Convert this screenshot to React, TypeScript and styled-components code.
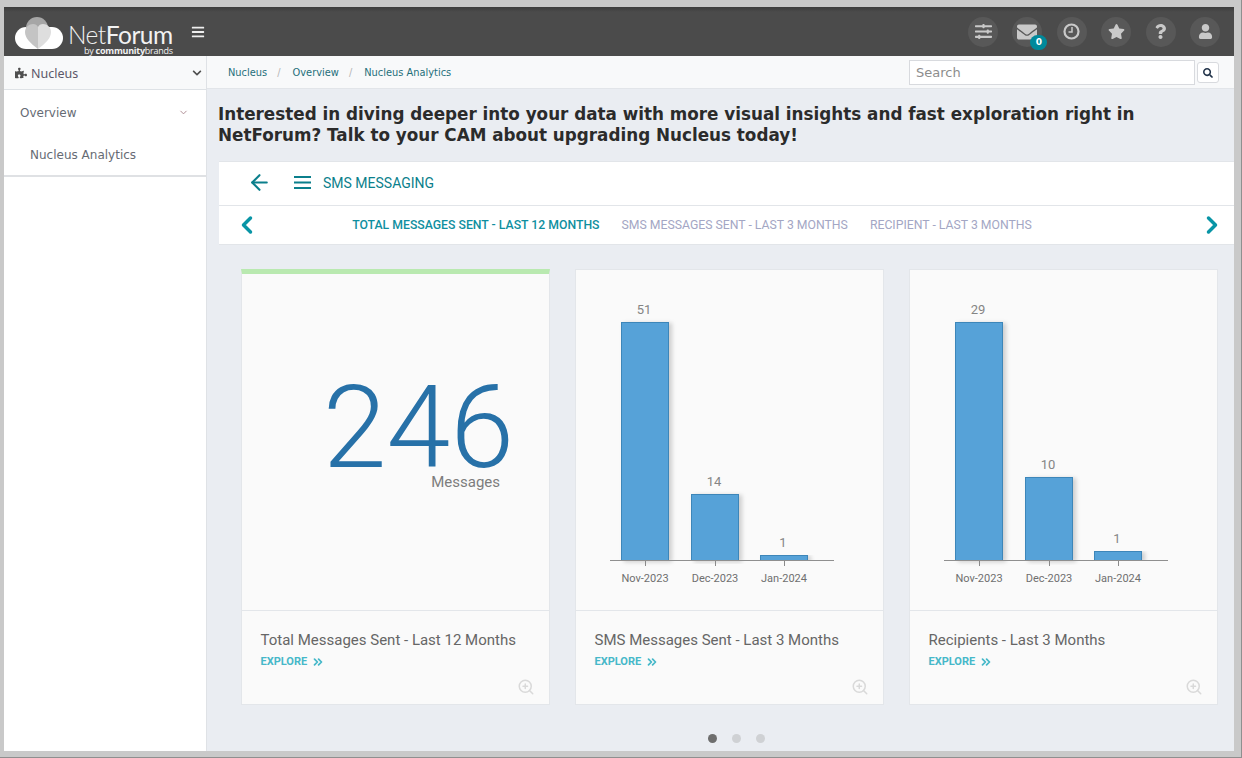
import React from 'react';
import styled, { createGlobalStyle } from 'styled-components';
import { FaBars, FaChevronDown, FaEnvelope, FaPuzzlePiece, FaQuestion, FaSearch, FaSlidersH, FaStar, FaUser } from 'react-icons/fa';
import { FiArrowLeft, FiChevronDown, FiChevronLeft, FiChevronRight, FiChevronsRight, FiZoomIn } from 'react-icons/fi';

const GlobalStyle = createGlobalStyle`
  html, body { margin: 0; padding: 0; height: 100%; }
  body { font-family: 'DejaVu Sans', sans-serif; overflow: hidden; }
  * { box-sizing: border-box; }
`;

const Frame = styled.div`
  width: 1242px;
  height: 758px;
  padding: 7px 8px 7px 4px;
  background: #c9c9c9;
  box-shadow: inset -1px -1px 0 #8f8f8f;
  overflow: hidden;
`;

const Window = styled.div`
  height: 744px;
  display: flex;
  flex-direction: column;
  background: #fff;
  overflow: hidden;
`;

const Header = styled.header`
  height: 49px;
  flex: none;
  display: flex;
  align-items: center;
  justify-content: space-between;
  padding: 0 14px 0 11px;
  background: linear-gradient(#3d3d3d 0, #4b4b4b 5px);
`;

const Brand = styled.div`
  display: flex;
  align-items: center;
`;

const LogoMark = styled.svg`
  display: block;
  margin-top: 2px;
`;

const LogoWords = styled.div`
  position: relative;
  width: 108px;
  height: 46px;
  margin-left: 5px;
  color: #f2f2f2;
`;

const LogoName = styled.span`
  position: absolute;
  top: 17px;
  left: 0;
  font: 300 24.5px/18px Lato, sans-serif;
  letter-spacing: -0.5px;
  white-space: nowrap;
  b {
    font-weight: 400;
  }
`;

const LogoSub = styled.span`
  position: absolute;
  top: 37px;
  left: 16px;
  font: 400 9px/10px 'Open Sans', sans-serif;
  letter-spacing: -0.25px;
  white-space: nowrap;
  b {
    font-weight: 700;
  }
`;

const MenuToggle = styled.div`
  margin: 0 0 0 15px;
  color: #efefef;
  font-size: 14px;
  display: flex;
`;

const HeaderIcons = styled.div`
  display: flex;
  gap: 14.4px;
`;

const IconCircle = styled.div`
  position: relative;
  width: 30px;
  height: 30px;
  border-radius: 50%;
  display: flex;
  align-items: center;
  justify-content: center;
  background: #585858;
  color: #c9c9c9;
  font-size: 17px;
`;

const Badge = styled.span`
  position: absolute;
  right: -5px;
  bottom: -3px;
  width: 17px;
  height: 15px;
  border-radius: 8px;
  background: #00899b;
  color: #fff;
  font: 700 9px/15px 'DejaVu Sans', sans-serif;
  text-align: center;
`;

const Body = styled.div`
  flex: 1;
  display: flex;
  min-height: 0;
`;

const Sidebar = styled.aside`
  width: 203px;
  flex: none;
  border-right: 1px solid #dfe2e6;
  background: #fff;
`;

const ModuleRow = styled.div`
  height: 34px;
  display: flex;
  align-items: center;
  padding: 1px 4px 0 11px;
  gap: 4px;
  background: #f8f9fa;
  border-bottom: 1px solid #dee2e6;
  color: #4f4f4f;
  font: 400 12.5px 'Noto Sans', sans-serif;
`;

const ModuleName = styled.span`
  flex: 1;
  color: #5b5768;
`;

const SideNav = styled.nav`
  border-bottom: 2px solid #dfe1e4;
  height: 87px;
`;

const SideItem = styled.div<{ $sub?: boolean }>`
  height: ${({ $sub }) => ($sub ? '40px' : '45px')};
  display: flex;
  align-items: center;
  justify-content: space-between;
  padding: ${({ $sub }) => ($sub ? '0 12px 0 26px' : '0 17px 0 16px')};
  color: #666b74;
  font: 400 12px 'DejaVu Sans', sans-serif;
  svg {
    color: #a8858d;
    font-size: 11px;
  }
`;

const Main = styled.main`
  flex: 1;
  min-width: 0;
  background: #eaedf2;
  display: flex;
  flex-direction: column;
`;

const BreadcrumbBar = styled.div`
  height: 33px;
  flex: none;
  display: flex;
  align-items: center;
  justify-content: space-between;
  padding: 1px 15px 0 21px;
  background: #f8f9fa;
  border-bottom: 1px solid #e2e5e9;
`;

const Crumbs = styled.div`
  display: flex;
  align-items: center;
  font: 400 9.85px 'DejaVu Sans', sans-serif;
  color: #1f6f7a;
`;

const CrumbSep = styled.span`
  color: #b5b5b5;
  margin: 0 12px 0 10px;
`;

const SearchWrap = styled.div`
  display: flex;
  align-items: center;
  gap: 2px;
`;

const SearchInput = styled.div`
  width: 286px;
  height: 25px;
  padding: 0 6px;
  background: #fff;
  border: 1px solid #d8dade;
  color: #8d8d8d;
  font: 400 13px/24px 'DejaVu Sans', sans-serif;
`;

const SearchButton = styled.div`
  width: 22px;
  height: 21px;
  display: flex;
  align-items: center;
  justify-content: center;
  background: #fff;
  border: 1px solid #d8dade;
  border-radius: 3px;
  color: #22344a;
  font-size: 10px;
`;

const Notice = styled.h2`
  margin: 0;
  padding: 15px 90px 15px 11px;
  flex: none;
  font: 700 16.8px/21px 'DejaVu Sans', sans-serif;
  color: #2b2b2b;
`;

const Panel = styled.section`
  flex: 1;
  margin-left: 12px;
  display: flex;
  flex-direction: column;
  min-height: 0;
`;

const TitleRow = styled.div`
  height: 45px;
  flex: none;
  display: flex;
  align-items: center;
  padding: 0 0 2px 28px;
  background: #fff;
  border-top: 1px solid #e2e5e9;
  border-bottom: 1px solid #e2e5e9;
  color: #0b7f8c;
  font: 400 14px 'Roboto', sans-serif;
`;

const TitleIcons = styled.div`
  display: flex;
  align-items: center;
  gap: 22px;
  margin-right: 12px;
  font-size: 25px;
  svg {
    display: block;
  }
`;

const TabRow = styled.div`
  height: 39px;
  flex: none;
  display: flex;
  align-items: center;
  justify-content: space-between;
  padding: 0 8px 0 14px;
  background: #fff;
  border-bottom: 1px solid #e2e5e9;
  color: #0995a6;
  font-size: 28px;
  svg {
    stroke-width: 3;
    display: block;
  }
`;

const Tabs = styled.div`
  display: flex;
  gap: 22px;
  margin-right: 75px;
`;

const Tab = styled.span<{ $active?: boolean }>`
  font: ${({ $active }) => ($active ? 500 : 400)} 12.25px 'Roboto', sans-serif;
  color: ${({ $active }) => ($active ? '#0f8fa0' : '#a3a6c4')};
`;

const Cards = styled.div`
  flex: none;
  display: flex;
  gap: 25px;
  padding: 24px 0 0 22px;
`;

const Card = styled.article<{ $accent?: boolean }>`
  width: 309px;
  height: 436px;
  display: flex;
  flex-direction: column;
  background: #fafafa;
  border: 1px solid #e3e6ea;
  ${({ $accent }) => $accent && 'border-top: 5px solid #b9e9b0;'}
`;

const CardVisual = styled.div`
  flex: 1;
  min-height: 0;
`;

const Metric = styled.div`
  height: 100%;
  display: flex;
  flex-direction: column;
  align-items: flex-end;
  padding: 110px 35px 0 0;
`;

const MetricValue = styled.div`
  font: 300 115px/88px 'Roboto', sans-serif;
  color: #2771a8;
`;

const MetricLabel = styled.div`
  margin-right: 14px;
  font: 400 15px/20px 'Roboto', sans-serif;
  color: #7d7d7d;
`;

const CardFooter = styled.div`
  height: 94px;
  flex: none;
  position: relative;
  padding: 19px 18px 0 18.5px;
  border-top: 1px solid #e3e6ea;
`;

const CardTitle = styled.div`
  font: 400 15px/20px 'Roboto', sans-serif;
  color: #666;
`;

const Explore = styled.div`
  margin-top: 3px;
  display: flex;
  align-items: center;
  gap: 4px;
  font: 700 11px/18px 'Roboto', sans-serif;
  color: #46b8c9;
  svg {
    stroke-width: 3;
    font-size: 14px;
  }
`;

const ZoomIcon = styled.div`
  position: absolute;
  right: 14px;
  bottom: 8px;
  display: flex;
  color: #d9d9d9;
  font-size: 18px;
`;

const Dots = styled.div`
  flex: none;
  display: flex;
  justify-content: center;
  gap: 15px;
  padding: 29px 0 0 20px;
`;

const Dot = styled.span<{ $on?: boolean }>`
  width: 9px;
  height: 9px;
  border-radius: 50%;
  background: ${({ $on }) => ($on ? '#6e6e6e' : '#cfd1d4')};
`;

const ChartSvg = styled.svg`
  display: block;
  text {
    font-family: Roboto, sans-serif;
    text-anchor: middle;
  }
`;

type Bar = { label: string; value: number; x: number; top: number };

const BarChart: React.FC<{ bars: Bar[] }> = ({ bars }) => {
  const base = 290;
  return (
    <ChartSvg width={307} height={339}>
      <defs>
        <filter id="barShadow" x="-20%" y="-5%" width="150%" height="110%">
          <feDropShadow dx="3" dy="1" stdDeviation="2" floodColor="#000" floodOpacity="0.18" />
        </filter>
      </defs>
      {bars.map((b) => (
        <g key={b.label}>
          <rect
            x={b.x + 0.5}
            y={b.top + 0.5}
            width={47}
            height={base - b.top}
            fill="#56a2d8"
            stroke="#3d86b9"
            filter="url(#barShadow)"
          />
          <text x={b.x + 23} y={b.top - 8} fontSize="13" fill="#858585">
            {b.value}
          </text>
          <line x1={b.x + 24.5} x2={b.x + 24.5} y1={base} y2={base + 6} stroke="#8a8a8a" />
          <text x={b.x + 24} y={base + 22} fontSize="11" fill="#6f6f6f">
            {b.label}
          </text>
        </g>
      ))}
      <line x1={34} x2={258} y1={base + 0.5} y2={base + 0.5} stroke="#8f8f8f" />
    </ChartSvg>
  );
};

const Logo: React.FC = () => (
  <LogoMark width="48" height="32" viewBox="0 0 48 32">
    <path d="M11 32a11 11 0 0 1 0-22h26a11 11 0 0 1 0 22Z" fill="#fff" />
    <circle cx="22" cy="11" r="11" fill="#a6a6a6" />
    <path d="M23 32C15 26 10 21 10 15c0-5 4-8 8-8 2.500 0 4 1 5 3Z" fill="#c4c4c4" />
    <path d="M23 32c8-6 13-11 13-17 0-5-4-8-8-8-2.500 0-4 1-5 3Z" fill="#dedede" />
  </LogoMark>
);

const ClockIcon: React.FC = () => (
  <svg width="17" height="17" viewBox="0 0 17 17" fill="none" stroke="currentColor">
    <circle cx="8.500" cy="8.500" r="7" strokeWidth="2.200" />
    <path d="M9 4v5H5.500" strokeWidth="1.500" />
  </svg>
);

const ThinBars: React.FC = () => (
  <svg width="17" height="13" viewBox="0 0 17 13" fill="currentColor">
    <rect width="17" height="2" />
    <rect y="5.500" width="17" height="2" />
    <rect y="11" width="17" height="2" />
  </svg>
);

const cards = [
  {
    title: 'SMS Messages Sent - Last 3 Months',
    bars: [
      { label: 'Nov-2023', value: 51, x: 45, top: 52 },
      { label: 'Dec-2023', value: 14, x: 115, top: 224 },
      { label: 'Jan-2024', value: 1, x: 184, top: 285 },
    ],
  },
  {
    title: 'Recipients - Last 3 Months',
    bars: [
      { label: 'Nov-2023', value: 29, x: 45, top: 52 },
      { label: 'Dec-2023', value: 10, x: 115, top: 207 },
      { label: 'Jan-2024', value: 1, x: 184, top: 281 },
    ],
  },
];

const CardBottom: React.FC<{ title: string }> = ({ title }) => (
  <CardFooter>
    <CardTitle>{title}</CardTitle>
    <Explore>
      EXPLORE <FiChevronsRight />
    </Explore>
    <ZoomIcon>
      <FiZoomIn />
    </ZoomIcon>
  </CardFooter>
);

const App: React.FC = () => {
  return (
    <Frame>
      <GlobalStyle />
      <Window>
        <Header>
          <Brand>
            <Logo />
            <LogoWords>
              <LogoName>
                Net<b>Forum</b>
              </LogoName>
              <LogoSub>
                by <b>community</b>brands
              </LogoSub>
            </LogoWords>
            <MenuToggle>
              <FaBars />
            </MenuToggle>
          </Brand>
          <HeaderIcons>
            <IconCircle>
              <FaSlidersH />
            </IconCircle>
            <IconCircle>
              <FaEnvelope size={20} />
              <Badge>0</Badge>
            </IconCircle>
            <IconCircle>
              <ClockIcon />
            </IconCircle>
            <IconCircle>
              <FaStar />
            </IconCircle>
            <IconCircle>
              <FaQuestion size={15} />
            </IconCircle>
            <IconCircle>
              <FaUser size={15} />
            </IconCircle>
          </HeaderIcons>
        </Header>
        <Body>
          <Sidebar>
            <ModuleRow>
              <FaPuzzlePiece size={12} />
              <ModuleName>Nucleus</ModuleName>
              <FaChevronDown size={10} />
            </ModuleRow>
            <SideNav>
              <SideItem>
                Overview
                <FiChevronDown />
              </SideItem>
              <SideItem $sub>Nucleus Analytics</SideItem>
            </SideNav>
          </Sidebar>
          <Main>
            <BreadcrumbBar>
              <Crumbs>
                Nucleus<CrumbSep>/</CrumbSep>Overview<CrumbSep>/</CrumbSep>Nucleus Analytics
              </Crumbs>
              <SearchWrap>
                <SearchInput>Search</SearchInput>
                <SearchButton>
                  <FaSearch />
                </SearchButton>
              </SearchWrap>
            </BreadcrumbBar>
            <Notice>
              Interested in diving deeper into your data with more visual insights and fast exploration right in
              NetForum? Talk to your CAM about upgrading Nucleus today!
            </Notice>
            <Panel>
              <TitleRow>
                <TitleIcons>
                  <FiArrowLeft />
                  <ThinBars />
                </TitleIcons>
                SMS MESSAGING
              </TitleRow>
              <TabRow>
                <FiChevronLeft />
                <Tabs>
                  <Tab $active>TOTAL MESSAGES SENT - LAST 12 MONTHS</Tab>
                  <Tab>SMS MESSAGES SENT - LAST 3 MONTHS</Tab>
                  <Tab>RECIPIENT - LAST 3 MONTHS</Tab>
                </Tabs>
                <FiChevronRight />
              </TabRow>
              <Cards>
                <Card $accent>
                  <CardVisual>
                    <Metric>
                      <MetricValue>246</MetricValue>
                      <MetricLabel>Messages</MetricLabel>
                    </Metric>
                  </CardVisual>
                  <CardBottom title="Total Messages Sent - Last 12 Months" />
                </Card>
                {cards.map((c) => (
                  <Card key={c.title}>
                    <CardVisual>
                      <BarChart bars={c.bars} />
                    </CardVisual>
                    <CardBottom title={c.title} />
                  </Card>
                ))}
              </Cards>
              <Dots>
                <Dot $on />
                <Dot />
                <Dot />
              </Dots>
            </Panel>
          </Main>
        </Body>
      </Window>
    </Frame>
  );
};

export default App;
